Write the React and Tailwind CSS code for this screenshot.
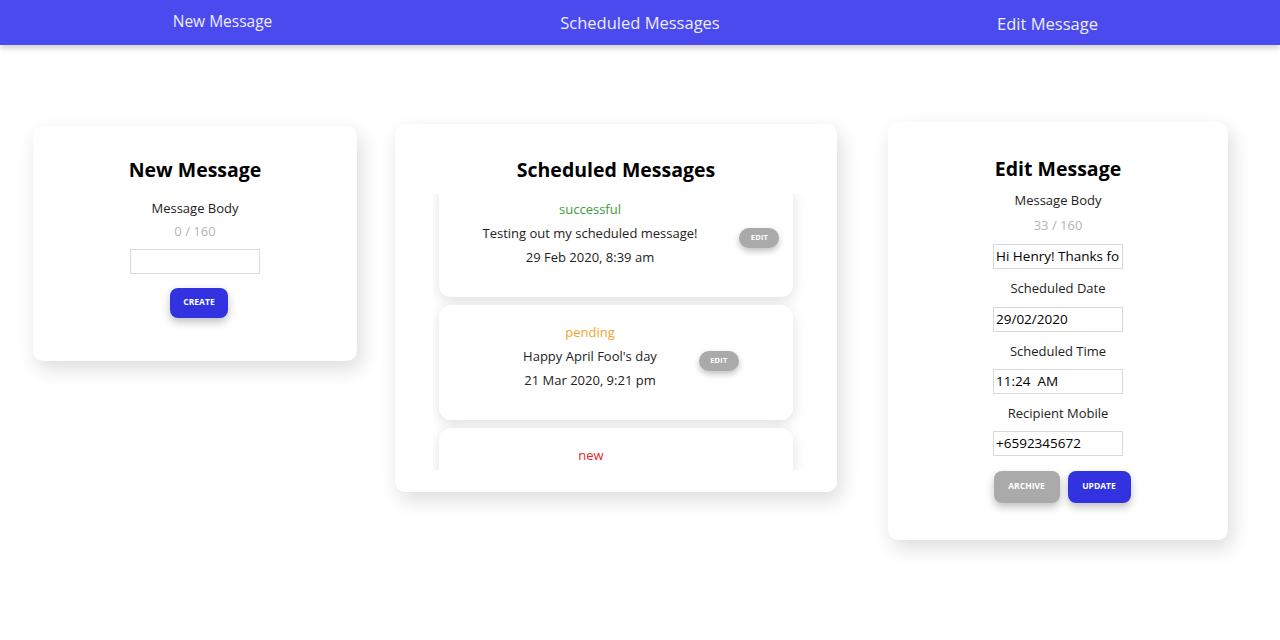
const font = "font-['Open_Sans',sans-serif]"

const messages = [
  { status: 'successful', color: 'text-[#3d9a3d]', body: 'Testing out my scheduled message!', date: '29 Feb 2020, 8:39 am' },
  { status: 'pending', color: 'text-[#f0a531]', body: "Happy April Fool's day", date: '21 Mar 2020, 9:21 pm' },
  { status: 'new', color: 'text-[#e8262b]', partial: true },
]

function Label({ children, className = '' }) {
  return <p className={`text-[13px] text-[#222] leading-none ${className}`}>{children}</p>
}

function Field({ value, className = '' }) {
  return (
    <input
      readOnly
      value={value}
      className={`w-[130px] h-[25px] border border-[#d9d9d9] px-[2px] text-[13.5px] text-black outline-none ${className}`}
    />
  )
}

function MessageItem({ m }) {
  return (
    <div className="bg-white rounded-xl shadow-[0_4px_14px_rgba(0,0,0,0.12)] h-[115px] mr-[15px] ml-[6px] mb-[8px] flex items-start justify-center pl-[30px] pt-[21px] shrink-0">
      <div className="flex flex-col items-center">
        <p className={`text-[13px] leading-none ${m.color}`}>{m.status}</p>
        {!m.partial && (
          <>
            <p className="text-[13px] leading-none text-[#222] mt-[11px]">{m.body}</p>
            <p className="text-[13px] leading-none text-[#222] mt-[11px]">{m.date}</p>
          </>
        )}
      </div>
      {m.partial ? (
        <span className="ml-[40px] w-[40px] h-[20px]" />
      ) : (
        <button className="ml-[42px] mt-[25px] w-[40px] h-[20px] rounded-full bg-[#aaaaaa] text-white text-[7.5px] font-bold tracking-wide shadow-[0_3px_6px_rgba(0,0,0,0.25)]">
          EDIT
        </button>
      )}
    </div>
  )
}

export default function App() {
  return (
    <div className={`min-h-screen bg-white ${font}`}>
      {/* Top nav */}
      <div className="h-[45px] bg-[#4a4aee] shadow-[0_3px_6px_rgba(0,0,0,0.2)] flex text-white/90">
        <div className="w-[445px] flex items-center justify-center text-[15.5px] pb-[1px]">New Message</div>
        <div className="w-[390px] flex items-center justify-center text-[16.5px] pt-[1px]">Scheduled Messages</div>
        <div className="w-[425px] flex items-center justify-center text-[16.5px] pt-[4px]">Edit Message</div>
      </div>

      <div className="flex items-start pt-[77px]">
        {/* New message */}
        <div className="ml-[33px] mt-[4px] w-[324px] h-[235px] bg-white rounded-[10px] shadow-[4px_8px_20px_rgba(0,0,0,0.14)] flex flex-col items-center pt-[34px]">
          <h2 className="text-[19.5px] font-bold text-black leading-none">New Message</h2>
          <Label className="mt-[22px]">Message Body</Label>
          <p className="text-[13px] leading-none text-[#b5b5b5] mt-[10px]">0 / 160</p>
          <Field value="" className="mt-[11px] w-[124px] h-[24px]" />
          <button className="mt-[14px] ml-[8px] w-[58px] h-[30px] rounded-lg bg-[#3232e0] text-white text-[8.5px] font-bold shadow-[0_4px_8px_rgba(0,0,0,0.25)]">
            CREATE
          </button>
        </div>

        {/* Scheduled messages */}
        <div className="ml-[38px] mt-[2px] w-[442px] h-[368px] bg-white rounded-[10px] shadow-[4px_8px_20px_rgba(0,0,0,0.14)] flex flex-col items-center pt-[36px]">
          <h2 className="text-[19.5px] font-bold text-black leading-none">Scheduled Messages</h2>
          <div className="mt-[14px] ml-[38px] self-start w-[375px] h-[276px] overflow-hidden flex flex-col">
            <div className="-mt-[12px] flex flex-col">
              {messages.map(m => <MessageItem key={m.status} m={m} />)}
            </div>
          </div>
        </div>

        {/* Edit message */}
        <div className="ml-[51px] w-[340px] h-[418px] bg-white rounded-[10px] shadow-[4px_8px_20px_rgba(0,0,0,0.14)] flex flex-col items-center pt-[37px]">
          <h2 className="text-[19.5px] font-bold text-black leading-none">Edit Message</h2>
          <Label className="mt-[15px]">Message Body</Label>
          <p className="text-[13px] leading-none text-[#b5b5b5] mt-[12px]">33 / 160</p>
          <Field value="Hi Henry! Thanks for coming today" className="mt-[12px]" />
          <Label className="mt-[13px]">Scheduled Date</Label>
          <Field value="29/02/2020" className="mt-[12px] h-[24px]" />
          <Label className="mt-[13px]">Scheduled Time</Label>
          <Field value="11:24  AM" className="mt-[11px] h-[24px]" />
          <Label className="mt-[13px]">Recipient Mobile</Label>
          <Field value="+6592345672" className="mt-[11px]" />
          <div className="flex gap-[8px] mt-[15px] ml-[8px]">
            <button className="w-[66px] h-[32px] rounded-lg bg-[#aaaaaa] text-white text-[8.5px] font-bold shadow-[0_4px_8px_rgba(0,0,0,0.25)]">
              ARCHIVE
            </button>
            <button className="w-[63px] h-[32px] rounded-lg bg-[#3232e0] text-white text-[8.5px] font-bold shadow-[0_4px_8px_rgba(0,0,0,0.25)]">
              UPDATE
            </button>
          </div>
        </div>
      </div>
    </div>
  )
}
